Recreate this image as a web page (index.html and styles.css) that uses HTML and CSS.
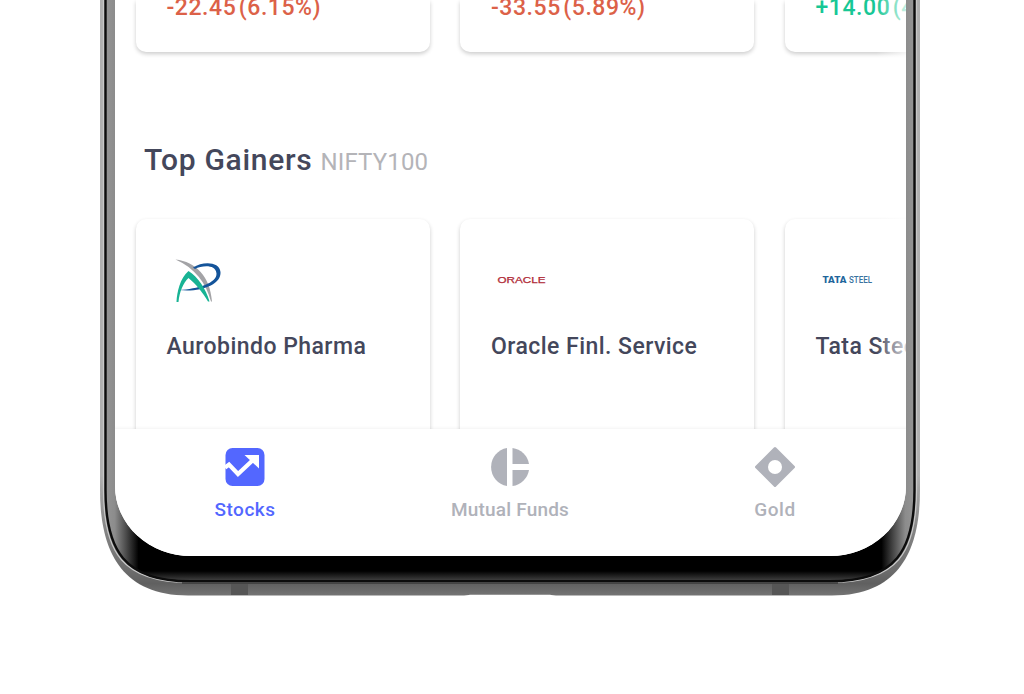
FILE: index.html
```
<!DOCTYPE html>
<html>
<head>
	<meta charset="UTF-8">
	<title>Stocks</title>
	<link rel="stylesheet" href="styles.css">
</head>
<body>

<div class="phone">
	<svg class="frame" width="820" height="600" viewBox="0 0 820 600">
		<defs>
			<linearGradient id="body" x1="0" y1="0" x2="0" y2="1">
				<stop offset="0.8" stop-color="#b0b0b0"/>
				<stop offset="0.89" stop-color="#858585"/>
				<stop offset="0.96" stop-color="#6c6c6c"/>
				<stop offset="0.98" stop-color="#606060"/>
				<stop offset="1" stop-color="#747474"/>
			</linearGradient>
			<linearGradient id="glass" gradientUnits="userSpaceOnUse" x1="0" y1="0" x2="820" y2="0">
				<stop offset="0.008" stop-color="#949494"/>
				<stop offset="0.018" stop-color="#8c8c8c"/>
				<stop offset="0.032" stop-color="#4a4a4a"/>
				<stop offset="0.047" stop-color="#000"/>
				<stop offset="0.953" stop-color="#000"/>
				<stop offset="0.968" stop-color="#4a4a4a"/>
				<stop offset="0.982" stop-color="#8c8c8c"/>
				<stop offset="0.992" stop-color="#949494"/>
			</linearGradient>
			<linearGradient id="lip" gradientUnits="userSpaceOnUse" x1="0" y1="571" x2="0" y2="580">
				<stop offset="0" stop-color="#3c3c3c" stop-opacity="0"/>
				<stop offset="1" stop-color="#3c3c3c"/>
			</linearGradient>
			<clipPath id="inside">
				<path d="M5-5V490C5 551 23 580.500 90 580.500H730C797 580.500 815 551 815 490V-5"/>
			</clipPath>
		</defs>
		<path d="M0-5V490C0 540 14 595.500 88 595.500H732C806 595.500 820 540 820 490V-5Z" fill="url(#body)"/>
		<path d="M131 584h17v11h-17zM672 584h17v11h-17z" fill="#565656"/>
		<path d="M364 596l6-1.200h80l6 1.200z" fill="#fff"/>
		<!-- rim -->
		<path d="M5-5V490C5 551 23 581 90 581H730C797 581 815 551 815 490V-5" fill="url(#glass)"/>
		<path d="M20 571H800V581H20Z" fill="url(#lip)" clip-path="url(#inside)"/>
		<path d="M3.500-5V490C3.500 552 22 582.500 90 582.500H730C798 582.500 816.500 552 816.500 490V-5" fill="none" stroke="#c8c8c8" stroke-width="1.200"/>
		<path d="M5.500-5V490C5.500 550 24 581.300 90 581.300H730C796 581.300 814.500 550 814.500 490V-5" fill="none" stroke="#0c0c0c" stroke-width="2.400"/>
		<path d="M82 583H738" fill="none" stroke="#3a3a3a" stroke-width="1.400"/>
	</svg>

	<div class="screen">
		<div class="content">
			<div class="row row-top">
				<div class="card"><p class="price down">-22.45<span>(6.15%)</span></p></div>
				<div class="card"><p class="price down">-33.55<span>(5.89%)</span></p></div>
				<div class="card"><p class="price up">+14.00<span>(4.12%)</span></p></div>
			</div>

			<h2>Top Gainers <small>NIFTY100</small></h2>

			<div class="row">
				<div class="card">
					<svg class="logo" width="60" height="60" viewBox="0 0 60 60">
						<path d="M8.500 9.500C29 12 43 26 45 51.500H44C39 33 28 18 8.500 9.500Z" fill="#a3a3a6"/>
						<path d="M26 17.500C36 11 52.500 11.500 53.500 22C54.500 35 33 42.500 12 40C31 39 50 33 49.500 23.500C48.500 14 35 15.500 28 19Z" fill="#14549a"/>
						<path d="M9.500 52C10 42 13 28 21.500 21C31 27 39 39 42.500 51.500H41C36 43 29 34 21.500 28C16 33 12.500 42 11.500 52Z" fill="#18b394"/>
					</svg>
					<h3>Aurobindo Pharma</h3>
				</div>
				<div class="card">
					<svg class="logo" width="60" height="60" viewBox="0 0 60 60">
						<text class="oracle" x="6.500" y="33" textLength="48" lengthAdjust="spacingAndGlyphs">ORACLE</text>
					</svg>
					<h3>Oracle Finl. Service</h3>
				</div>
				<div class="card">
					<svg class="logo" width="60" height="60" viewBox="0 0 60 60">
						<text class="tata" x="6.500" y="33" textLength="24" lengthAdjust="spacingAndGlyphs">TATA</text>
						<text class="steel" x="33" y="33" textLength="23" lengthAdjust="spacingAndGlyphs">STEEL</text>
					</svg>
					<h3>Tata Steel</h3>
				</div>
			</div>
			<div class="fade"></div>
		</div>

		<div class="tabs">
			<div class="tab active">
				<svg width="42" height="42" viewBox="0 0 42 42">
					<rect x="1.500" y="2" width="39" height="38" rx="7" fill="#5367ff"/>
					<path d="M1 21.500L5 18.500L14 28L29 14" fill="none" stroke="#fff" stroke-width="4.200"/>
					<path d="M20.500 9H35V22.500Z" fill="#fff"/>
				</svg>
				<span>Stocks</span>
			</div>
			<div class="tab funds">
				<svg width="42" height="42" viewBox="0 0 42 42">
					<path d="M18 2V40A19.300 19.300 0 0 1 18 2Z" fill="#b0b2ba"/>
					<path d="M23.500 2A19.300 19.300 0 0 1 40 18H23.500Z" fill="#b0b2ba"/>
					<path d="M23.500 24H40A19.300 19.300 0 0 1 23.500 40Z" fill="#b0b2ba"/>
				</svg>
				<span>Mutual Funds</span>
			</div>
			<div class="tab">
				<svg width="42" height="42" viewBox="0 0 42 42">
					<path d="M21 2.500L39.500 21L21 39.500L2.500 21Z" fill="#b0b2ba" stroke="#b0b2ba" stroke-width="3" stroke-linejoin="round"/>
					<circle cx="21" cy="21" r="7" fill="#fff"/>
				</svg>
				<span>Gold</span>
			</div>
		</div>
	</div>
</div>

</body>
</html>
```
FILE: styles.css
```
body {
	margin: 0;
	background: #fff;
	font-family: Roboto, "Liberation Sans", sans-serif;
	overflow: hidden;
}

h2, h3, p {
	margin: 0;
	white-space: nowrap;
}

.phone {
	position: relative;
	width: 820px;
	height: 600px;
	margin-left: 100px;
}

.frame {
	position: absolute;
	top: 0;
	left: 0;
}

.screen {
	position: relative;
	width: 791px;
	height: 555.5px;
	margin-left: 14.5px;
	background: #fff;
	border-radius: 0 0 76px 76px / 0 0 70px 70px;
	overflow: hidden;
}

.content {
	position: relative;
	height: 429px;
	overflow: hidden;
}

.row {
	display: flex;
	gap: 30.5px;
	padding-left: 21px;
}

.card {
	box-sizing: border-box;
	flex: 0 0 294px;
	height: 240px;
	padding: 31px;
	background: #fff;
	border-radius: 10px;
	box-shadow: 0 2px 4px rgba(0, 0, 0, 0.2);
}

.row-top .card {
	height: 52px;
	padding-top: 0;
	border-radius: 0 0 10px 10px;
}

.price {
	margin-top: -6px;
	font-size: 23px;
	font-weight: 500;
	line-height: 28px;
	letter-spacing: 0.55px;
}

.price span {
	margin-left: 2.5px;
}

.down {
	color: #dc6148;
}

.up {
	color: #17c795;
}

h2 {
	padding: 88px 0 37px 29.5px;
	font-size: 30px;
	font-weight: 500;
	line-height: 40px;
	letter-spacing: 0.7px;
	color: #44475b;
}

h2 small {
	font-size: 24px;
	font-weight: 400;
	letter-spacing: 0.15px;
	color: #b4b4b8;
}

.logo {
	display: block;
}

h3 {
	margin-top: 21px;
	font-size: 23px;
	font-weight: 500;
	line-height: 32px;
	letter-spacing: 0.45px;
	color: #44475b;
}

.oracle {
	font: 400 8.5px "Liberation Sans", sans-serif;
	fill: #b02a37;
	stroke: #b02a37;
	stroke-width: 0.25px;
}

.tata {
	font: 900 9px Roboto, sans-serif;
	fill: #21659b;
}

.steel {
	font: 500 9px Roboto, sans-serif;
	fill: #3a729f;
}

/* cards fade out where the list scrolls off the screen */
.fade {
	position: absolute;
	top: 0;
	right: 0;
	width: 30px;
	height: 100%;
	background: linear-gradient(to right, rgba(255, 255, 255, 0), rgba(255, 255, 255, 0.75));
}

.tabs {
	position: relative;
	display: flex;
	height: 127px;
	margin: 0 -2px;
	background: #fff;
	box-shadow: 0 -1px 3px rgba(0, 0, 0, 0.05);
}

.tab {
	flex: 1;
	display: flex;
	flex-direction: column;
	align-items: center;
	padding-top: 17px;
	font-size: 19px;
	font-weight: 500;
	line-height: 24px;
	letter-spacing: 0.5px;
	color: #b0b2ba;
}

.tab span {
	margin-top: 10px;
}

.active {
	color: #5367ff;
}

.funds {
	letter-spacing: 0.2px;
}
```
